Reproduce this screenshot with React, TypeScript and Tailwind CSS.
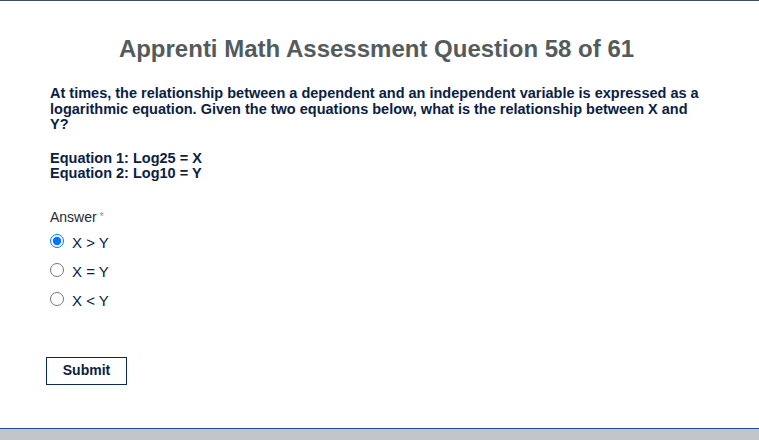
import React, { useState } from 'react';

const OPTIONS = ['X > Y', 'X = Y', 'X < Y'];

export default function App() {
  const [answer, setAnswer] = useState(OPTIONS[0]);

  return (
    <div className="w-[759px] h-[440px] flex flex-col bg-white border-t border-[#3f4e5a] font-['Liberation_Sans',Arial,sans-serif] overflow-hidden">
      <main className="flex-1 pl-[50px] pr-[56px] pt-[34px]">
        <h1 className="text-center text-[24px] leading-[27px] font-bold text-[#535c5c]">
          Apprenti Math Assessment Question 58 of 61
        </h1>

        <p className="mt-[24px] text-[14.5px] leading-[15.5px] font-bold text-[#0b2142]">
          At times, the relationship between a dependent and an independent variable is expressed as a
          logarithmic equation. Given the two equations below, what is the relationship between X and
          Y?
        </p>

        <div className="mt-[18px] text-[14.5px] leading-[15.5px] font-bold text-[#0b2142]">
          <div>Equation 1: Log25 = X</div>
          <div>Equation 2: Log10 = Y</div>
        </div>

        <fieldset className="mt-[27px]">
          <legend className="text-[14px] leading-[16px] text-[#1f2a36]">
            Answer<span className="ml-[3px] text-[10px] align-top text-[#e8646a]">*</span>
          </legend>
          <div className="mt-[2px] flex flex-col">
            {OPTIONS.map((opt) => (
              <label key={opt} className="flex items-center gap-[8px] h-[29px] cursor-pointer">
                <input
                  type="radio"
                  name="answer"
                  className="w-[14px] h-[14px]"
                  checked={answer === opt}
                  onChange={() => setAnswer(opt)}
                />
                <span className="text-[15px] leading-[16px] pt-[4px] text-[#0b2142] whitespace-pre">
                  {opt}
                </span>
              </label>
            ))}
          </div>
        </fieldset>

        <button
          type="button"
          className="mt-[43px] -ml-[4px] w-[81px] h-[28px] border border-[#0b2a52] text-[14px] font-bold text-[#0b2142] bg-white"
        >
          Submit
        </button>
      </main>
      <footer className="h-[12px] border-t border-[#1c4f86] bg-[#c2c6c8]" />
    </div>
  );
}
